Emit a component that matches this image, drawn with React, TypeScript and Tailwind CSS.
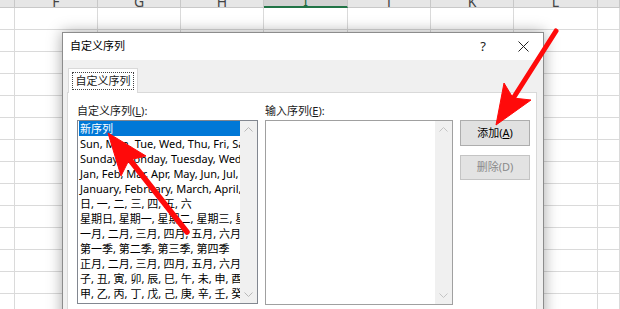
const COLS = [
  { label: "", cls: "w-[15px]" },
  { label: "F", cls: "w-[83px]" },
  { label: "G", cls: "w-[83px]" },
  { label: "H", cls: "w-[83px]" },
  { label: "I", cls: "w-[84px]", active: true },
  { label: "J", cls: "w-[83px]" },
  { label: "K", cls: "w-[83px]" },
  { label: "L", cls: "w-[84px]" },
  { label: "", cls: "flex-1" },
];

const SERIES = [
  "新序列",
  "Sun, Mon, Tue, Wed, Thu, Fri, Sat",
  "Sunday, Monday, Tuesday, Wednesday, Thursday, Friday, Saturday",
  "Jan, Feb, Mar, Apr, May, Jun, Jul, Aug, Sep, Oct, Nov, Dec",
  "January, February, March, April, May, June, July, August",
  "日, 一, 二, 三, 四, 五, 六",
  "星期日, 星期一, 星期二, 星期三, 星期四, 星期五, 星期六",
  "一月, 二月, 三月, 四月, 五月, 六月, 七月, 八月",
  "第一季, 第二季, 第三季, 第四季",
  "正月, 二月, 三月, 四月, 五月, 六月, 七月, 八月",
  "子, 丑, 寅, 卯, 辰, 巳, 午, 未, 申, 酉, 戌, 亥",
  "甲, 乙, 丙, 丁, 戊, 己, 庚, 辛, 壬, 癸",
];

function Chevron({ up, color }: { up?: boolean; color: string }) {
  return (
    <svg width="9" height="5" viewBox="0 0 9 5" fill="none">
      <path d={up ? "M0.5 4.5 L4.5 0.5 L8.5 4.5" : "M0.5 0.5 L4.5 4.5 L8.5 0.5"} stroke={color} strokeWidth="1" />
    </svg>
  );
}

function Scrollbar({ color }: { color: string }) {
  return (
    <div className="w-[17px] bg-[#f0f0f0] flex flex-col items-center justify-between pt-[6px] pb-[6px]">
      <Chevron up color={color} />
      <Chevron color={color} />
    </div>
  );
}

function Sheet() {
  return (
    <div className="flex flex-col">
      <div className="flex h-[8px] bg-[#e6e6e6]">
        {COLS.map((c, i) => (
          <div
            key={i}
            className={`${c.cls} shrink-0 h-[8px] overflow-hidden flex items-end justify-center border-r border-[#c8c8c8] ${
              c.active ? "bg-[#d2d2d2] border-b-2 border-b-[#217346]" : "border-b border-b-[#c8c8c8]"
            }`}
          >
            <span className={`text-[14px] leading-[14px] translate-y-[2px] ${c.active ? "text-[#1e6b40]" : "text-[#444]"}`}>
              {c.label}
            </span>
          </div>
        ))}
      </div>
      {Array.from({ length: 14 }).map((_, r) => (
        <div key={r} className="flex h-[22px]">
          {COLS.map((c, i) => (
            <div key={i} className={`${c.cls} shrink-0 h-[22px] border-r border-b border-[#dadada]`} />
          ))}
        </div>
      ))}
    </div>
  );
}

function Dialog() {
  return (
    <div className="absolute left-[62px] top-[32px] w-[482px] h-[300px] border border-[#8c8c8c] bg-[#f0f0f0] shadow-[0_0_14px_rgba(0,0,0,0.35)] flex flex-col">
      <div className="h-[27px] bg-white flex items-center shrink-0">
        <span className="pl-[7px] text-[#000]">自定义序列</span>
        <span className="ml-auto w-[40px] text-center text-[13px] text-[#222]">?</span>
        <span className="w-[40px] flex justify-center">
          <svg width="11" height="11" viewBox="0 0 11 11">
            <path d="M0.5 0.5 L10.5 10.5 M10.5 0.5 L0.5 10.5" stroke="#222" strokeWidth="1" />
          </svg>
        </span>
      </div>
      <div className="flex-1 flex flex-col pl-[4px] pr-[6px] pt-[8px]">
        <div className="flex">
          <div className="relative z-10 ml-[1px] w-[70px] h-[25px] bg-white border border-b-0 border-[#d9d9d9] p-[3px]">
            <div className="h-full border border-dotted border-[#444] flex items-center justify-center">自定义序列</div>
          </div>
        </div>
        <div className="-mt-px flex-1 bg-white border border-[#d9d9d9] pt-[10px] pl-[9px] pr-[6px] flex gap-[7px]">
          <div className="w-[181px] flex flex-col">
            <div className="h-[15px] leading-[15px] mb-[2px]">
              自定义序列(<u>L</u>):
            </div>
            <div className="h-[184px] border border-[#828790] flex">
              <div className="flex-1 pl-[1px] overflow-hidden">
                {SERIES.map((s, i) => (
                  <div
                    key={i}
                    className={`h-[15px] leading-[15px] pl-[1px] whitespace-nowrap ${
                      i === 0 ? "bg-[#0078d7] text-white" : "text-[#000]"
                    }`}
                  >
                    {s}
                  </div>
                ))}
              </div>
              <Scrollbar color="#b8b8b8" />
            </div>
          </div>
          <div className="w-[188px] flex flex-col">
            <div className="h-[15px] leading-[15px] mb-[2px]">
              输入序列(<u>E</u>):
            </div>
            <div className="h-[185px] border border-[#a0a0a0] flex bg-white">
              <div className="flex-1" />
              <Scrollbar color="#c4c4c4" />
            </div>
          </div>
          <div className="w-[70px] flex flex-col pt-[17px] gap-[9px]">
            <div className="h-[26px] bg-[#e1e1e1] border border-[#adadad] flex items-center justify-center text-[#000]">
              添加(<u>A</u>)
            </div>
            <div className="h-[25px] bg-[#e3e3e3] border border-[#c4c4c4] flex items-center justify-center text-[#8a8a8a]">
              删除(D)
            </div>
          </div>
        </div>
      </div>
    </div>
  );
}

function Arrows() {
  return (
    <svg className="absolute inset-0 pointer-events-none" width="620" height="309" viewBox="0 0 620 309">
      <g fill="#ff0a0a" stroke="#ff0a0a" strokeLinejoin="round">
        <line x1="556" y1="31" x2="514" y2="97" strokeWidth="5" strokeLinecap="round" />
        <polygon points="496,125 531,100 513,98 504,83" strokeWidth="1" />
        <line x1="187" y1="232" x2="130" y2="160" strokeWidth="5.5" strokeLinecap="round" />
        <polygon points="108,133 146,156 129,160 121,176" strokeWidth="1" />
      </g>
    </svg>
  );
}

export default function App() {
  return (
    <div className="relative w-[620px] h-[309px] overflow-hidden bg-white font-['Noto_Sans','Noto_Sans_CJK_SC',sans-serif] text-[11px] text-[#1a1a1a]">
      <Sheet />
      <Dialog />
      <Arrows />
    </div>
  );
}
